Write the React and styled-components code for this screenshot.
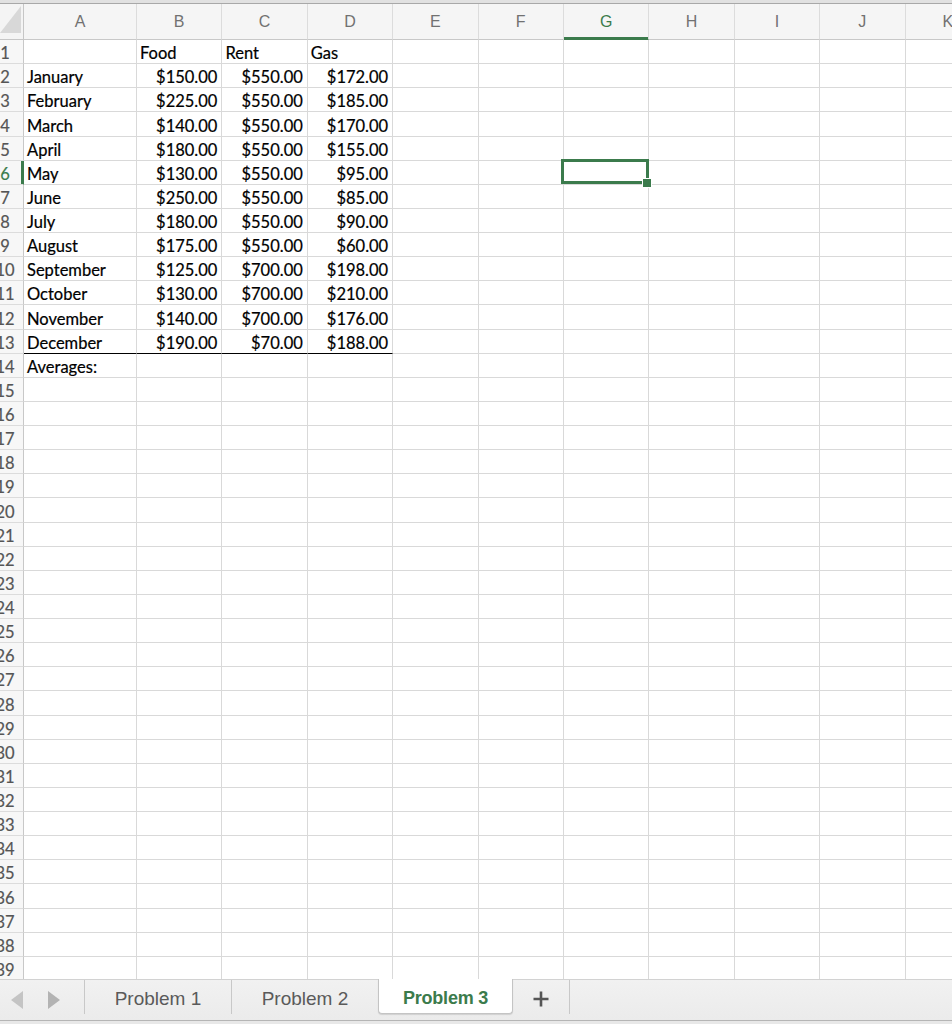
import React from "react";
import styled, { createGlobalStyle } from "styled-components";

const GREEN = "#3b7b4c";
const GRID = "#d9d9d9";

const Global = createGlobalStyle`
  html, body { margin: 0; padding: 0; background: #fff; }
  body { width: 952px; height: 1024px; overflow: hidden; }
`;

const Window = styled.div`
  display: flex;
  flex-direction: column;
  width: 952px;
  height: 1024px;
  overflow: hidden;
  background: #fff;
`;

const TopBand = styled.div`
  flex: none;
  height: 3px;
  background: #e1e1e1;
  border-bottom: 1px solid #a8a8a8;
`;

const Sheet = styled.div`
  flex: none;
  display: grid;
  grid-template-columns: 24px 113px repeat(10, 85.4px);
  grid-template-rows: 36px;
  grid-auto-rows: 24.14px;
  height: 975px;
  overflow: hidden;
  font-family: Lato, "Noto Sans", sans-serif;
  font-size: 16.5px;
  color: #000;
  -webkit-text-stroke: 0.2px currentColor;
`;

const Corner = styled.div`
  background: #f4f4f4;
  border-right: 1px solid #c6c6c6;
  border-bottom: 1px solid #c6c6c6;
  display: flex;
  align-items: flex-end;
  justify-content: flex-end;
  overflow: hidden;
`;

const ColHead = styled.div`
  display: flex;
  align-items: center;
  justify-content: center;
  background: #f5f5f5;
  border-right: 1px solid #dcdcdc;
  border-bottom: 1px solid ${(p) => (p.$active ? GREEN : "#c8c8c8")};
  box-shadow: ${(p) => (p.$active ? `inset 0 -2px 0 ${GREEN}` : "none")};
  font-family: "Liberation Sans", Arial, sans-serif;
  font-size: 16px;
  -webkit-text-stroke: 0;
  color: ${(p) => (p.$active ? GREEN : "#717171")};
  white-space: nowrap;
  overflow: hidden;
`;

const RowHead = styled.div`
  display: flex;
  align-items: flex-end;
  overflow: hidden;
  box-sizing: border-box;
  background: #f7f7f7;
  border-right: 1px solid ${(p) => (p.$active ? GREEN : "#c8c8c8")};
  border-bottom: 1px solid #dcdcdc;
  box-shadow: ${(p) => (p.$active ? `inset -2px 0 0 ${GREEN}` : "none")};
  color: ${(p) => (p.$active ? GREEN : "#555")};
`;

const RowNum = styled.span`
  flex: none;
  width: 38px;
  margin-left: -14px;
  text-align: center;
  white-space: nowrap;
`;

const Cell = styled.div`
  position: ${(p) => (p.$selected ? "relative" : "static")};
  display: flex;
  align-items: flex-end;
  justify-content: ${(p) => (p.$right ? "flex-end" : "flex-start")};
  box-sizing: border-box;
  padding: 0 4px 0 3px;
  border-right: 1px solid ${GRID};
  border-bottom: 1px solid ${(p) => (p.$rule ? "#000" : GRID)};
  white-space: nowrap;
  min-width: 0;
`;

const Selection = styled.div`
  position: absolute;
  top: -2px;
  left: -3px;
  right: -1px;
  bottom: 0;
  border: 3px solid ${GREEN};
  pointer-events: none;
  z-index: 2;
`;

const FillHandle = styled.div`
  position: absolute;
  right: -3px;
  bottom: -3px;
  width: 8px;
  height: 8px;
  background: ${GREEN};
  box-shadow: 0 0 0 1px #fff;
  z-index: 3;
`;

const TabBar = styled.div`
  flex: none;
  height: 42px;
  box-sizing: border-box;
  display: flex;
  align-items: flex-start;
  background: linear-gradient(#f1f1f1, #ebebeb);
  border-top: 1px solid #d2d2d2;
  border-bottom: 1px solid #b5b5b5;
  font-family: "Liberation Sans", Arial, sans-serif;
`;

const Footer = styled.div`
  flex: none;
  height: 3px;
  background: #e8e8e8;
`;

const Arrows = styled.div`
  flex: none;
  width: 85px;
  height: 34px;
  box-sizing: border-box;
  display: flex;
  align-items: center;
  gap: 25px;
  padding: 5px 0 0 11px;
  border-right: 1px solid #c8c8c8;
`;

const Tab = styled.div`
  flex: none;
  width: ${(p) => p.$w}px;
  height: 34px;
  box-sizing: border-box;
  display: flex;
  align-items: center;
  justify-content: center;
  padding-top: 4px;
  font-size: 19px;
  color: #5a5a5a;
  border-right: ${(p) => (p.$sep ? "1px solid #c8c8c8" : "none")};
  white-space: nowrap;
`;

const ActiveTab = styled.div`
  flex: none;
  width: 135px;
  height: 35px;
  margin-top: -1px;
  box-sizing: border-box;
  display: flex;
  align-items: center;
  justify-content: center;
  padding-top: 4px;
  background: #fff;
  border: 1px solid #c4c4c4;
  border-top: none;
  border-radius: 0 0 4px 4px;
  box-shadow: 0 1px 1px rgba(0, 0, 0, 0.12);
  font-size: 18px;
  font-weight: bold;
  letter-spacing: -0.2px;
  color: ${GREEN};
  white-space: nowrap;
`;

const COLS = ["A", "B", "C", "D", "E", "F", "G", "H", "I", "J", "K"];

const data = [
  ["January", 150, 550, 172],
  ["February", 225, 550, 185],
  ["March", 140, 550, 170],
  ["April", 180, 550, 155],
  ["May", 130, 550, 95],
  ["June", 250, 550, 85],
  ["July", 180, 550, 90],
  ["August", 175, 550, 60],
  ["September", 125, 700, 198],
  ["October", 130, 700, 210],
  ["November", 140, 700, 176],
  ["December", 190, 70, 188],
];

const money = (n) => `$${n.toFixed(2)}`;

function cellsFor(row) {
  const out = COLS.map(() => ({ text: "", right: false }));
  if (row === 1) {
    out[1].text = "Food";
    out[2].text = "Rent";
    out[3].text = "Gas";
  } else if (row >= 2 && row <= 13) {
    const d = data[row - 2];
    out[0].text = d[0];
    out[1] = { text: money(d[1]), right: true };
    out[2] = { text: money(d[2]), right: true };
    out[3] = { text: money(d[3]), right: true };
  } else if (row === 14) {
    out[0].text = "Averages:";
  }
  return out;
}

const SEL_ROW = 6;
const SEL_COL = 6;

export default function App() {
  const rows = [];
  for (let r = 1; r <= 39; r++) {
    const cells = cellsFor(r);
    rows.push(
      <RowHead key={`h${r}`} $active={r === SEL_ROW}>
        <RowNum>{r}</RowNum>
      </RowHead>
    );
    cells.forEach((c, ci) => {
      const selected = r === SEL_ROW && ci === SEL_COL;
      rows.push(
        <Cell
          key={`c${r}-${ci}`}
          $right={c.right}
          $rule={r === 13 && ci <= 3}
          $selected={selected}
        >
          {c.text}
          {selected && (
            <>
              <Selection />
              <FillHandle />
            </>
          )}
        </Cell>
      );
    });
  }

  return (
    <Window>
      <Global />
      <TopBand />
      <Sheet>
        <Corner>
          <svg width="23" height="35" viewBox="0 0 23 35">
            <polygon points="0,29 21,29 21,2" fill="#d8d8d8" />
          </svg>
        </Corner>
        {COLS.map((c, i) => (
          <ColHead key={c} $active={i === SEL_COL}>
            {c}
          </ColHead>
        ))}
        {rows}
      </Sheet>
      <TabBar>
        <Arrows>
          <svg width="12" height="18" viewBox="0 0 12 18">
            <polygon points="0,9 12,0 12,18" fill="#c4c4c4" />
          </svg>
          <svg width="12" height="18" viewBox="0 0 12 18">
            <polygon points="12,9 0,0 0,18" fill="#b3b3b3" />
          </svg>
        </Arrows>
        <Tab $w={147} $sep>
          Problem 1
        </Tab>
        <Tab $w={146}>Problem 2</Tab>
        <ActiveTab>Problem 3</ActiveTab>
        <Tab $w={57} $sep>
          <svg width="16" height="16" viewBox="0 0 16 16">
            <path d="M8 0.5V15.5M0.5 8H15.5" stroke="#555" strokeWidth="2.6" />
          </svg>
        </Tab>
      </TabBar>
      <Footer />
    </Window>
  );
}
